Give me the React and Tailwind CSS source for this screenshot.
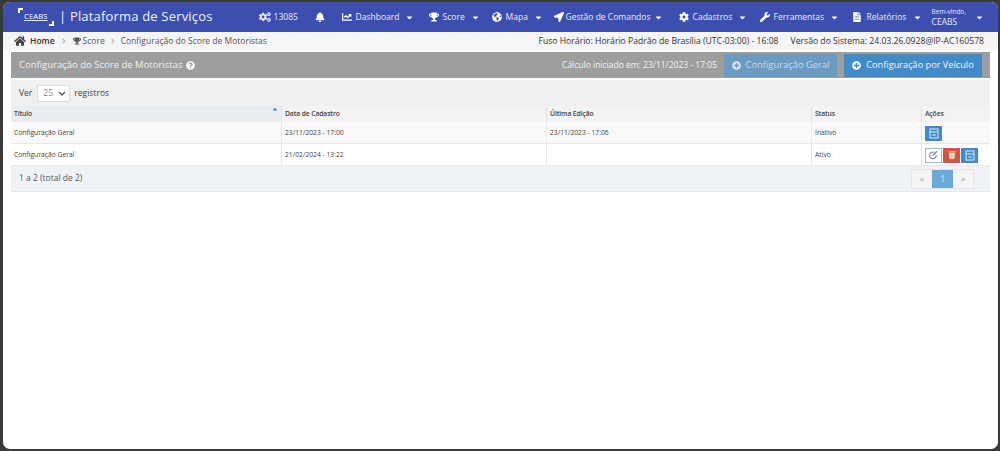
import React from 'react';
import {
  FaCogs, FaBell, FaChartLine, FaTrophy, FaGlobeAmericas, FaLocationArrow, FaCog, FaWrench,
  FaFileAlt, FaHome, FaAngleRight, FaQuestionCircle, FaPlusCircle, FaTrash, FaCaretDown, FaCaretUp,
} from 'react-icons/fa';

const menu = [
  { label: 'Dashboard', icon: FaChartLine, width: 'w-[87px]', gap: 'gap-[4px]' },
  { label: 'Score', icon: FaTrophy, width: 'w-[63px]', gap: 'gap-[4px]' },
  { label: 'Mapa', icon: FaGlobeAmericas, width: 'w-[62px]', gap: 'gap-[4px]' },
  { label: 'Gestão de Comandos', icon: FaLocationArrow, width: 'w-[125px]', gap: 'gap-[2px]' },
  { label: 'Cadastros', icon: FaCog, width: 'w-[81px]', gap: 'gap-[4px]' },
  { label: 'Ferramentas', icon: FaWrench, width: 'w-[92px]', gap: 'gap-[4px]' },
  { label: 'Relatórios', icon: FaFileAlt, width: 'w-[80px]', gap: 'gap-[5px]' },
];

function ListIcon() {
  return (
    <svg width="10" height="11" viewBox="0 0 10 11" fill="none" stroke="currentColor">
      <rect x="1" y="1" width="8" height="9" strokeWidth="1" />
      <path d="M1 4h8M3 7h4" strokeWidth="1" />
    </svg>
  );
}

function EditIcon() {
  return (
    <svg width="11" height="10" viewBox="0 0 11 10" fill="none" stroke="#6d8ba5" strokeWidth="1.1">
      <path d="M6 2.2A3.3 3.3 0 1 0 8.2 5" />
      <path d="M4.6 5.6L9 1.2" strokeWidth="1.4" />
    </svg>
  );
}

function Logo() {
  return (
    <div className="relative w-[36px] h-[18px] text-white">
      <span className="absolute left-0 top-0 w-[5px] h-[5px] border-l-2 border-t-2 border-white" />
      <span className="absolute right-0 bottom-0 w-[5px] h-[5px] border-r-2 border-b-2 border-white" />
      <span className="absolute left-[6px] top-[4px] text-[7.5px] leading-[9px] tracking-[0.2px] underline decoration-[#dfe3f5]">CEABS</span>
    </div>
  );
}

function Cell({ children, className = '' }) {
  return <div className={`flex items-center pl-[3px] pt-[1px] text-[6.75px] text-[#444] whitespace-nowrap ${className}`}>{children}</div>;
}

const cols = 'grid grid-cols-[271px_265px_265px_110px_68px]';

export default function App() {
  return (
    <div className="w-[1000px] h-[451px] bg-[#3a3a3a] pt-[2px] pb-[2px] pl-[3px] pr-[2px] font-['Open_Sans',sans-serif] overflow-hidden">
      <div className="h-full bg-white rounded-[7px] overflow-hidden flex flex-col">
        {/* navbar */}
        <div className="h-[30px] shrink-0 bg-[#3c4fb1] flex items-center text-[#e6e9f7] pl-[15px]">
          <Logo />
          <span className="ml-[5px] text-[13px] tracking-[0.18px] text-[#f0f2fb] whitespace-nowrap">| Plataforma de Serviços</span>
          <div className="ml-[46px] flex items-center gap-[3px] text-[8.5px] w-[56px] shrink-0">
            <FaCogs className="text-[12px]" />
            <span>13085</span>
          </div>
          <FaBell className="text-[10px] mr-[17px] shrink-0 text-white" />
          {menu.map((m) => (
            <div key={m.label} className={`flex items-center text-[8.5px] whitespace-nowrap shrink-0 ${m.gap} ${m.width}`}>
              <m.icon className="text-[10px] shrink-0 text-white" />
              <span>{m.label}</span>
              <FaCaretDown className="text-[9px] ml-[2px] text-white" />
            </div>
          ))}
          <div className="flex items-center shrink-0">
            <div className="leading-[10px] w-[43px]">
              <div className="text-[6.5px]">Bem-vindo,</div>
              <div className="text-[8.5px]">CEABS</div>
            </div>
            <FaCaretDown className="text-[9px] text-white" />
          </div>
        </div>

        {/* breadcrumb */}
        <div className="h-[18px] shrink-0 bg-[#f5f5f5] flex items-center pl-[11px] pr-[14px] text-[8.5px] text-[#555] whitespace-nowrap">
          <FaHome className="text-[12px] text-[#444]" />
          <span className="ml-[4px] font-semibold text-[#333]">Home</span>
          <FaAngleRight className="text-[8px] mx-[5px] text-[#bbb]" />
          <FaTrophy className="text-[8px] text-[#555]" />
          <span className="ml-[2px]">Score</span>
          <FaAngleRight className="text-[8px] mx-[4px] text-[#bbb]" />
          <span>Configuração do Score de Motoristas</span>
          <span className="ml-auto text-[8.65px] text-[#333]">Fuso Horário: Horário Padrão de Brasília (UTC-03:00) - 16:08</span>
          <span className="ml-[12px] text-[8.65px] text-[#333]">Versão do Sistema: 24.03.26.0928@IP-AC160578</span>
        </div>

        <div className="flex-1 pl-[8px] pr-[8px] pt-[2px]">
          {/* title bar */}
          <div className="h-[26px] bg-[#9e9e9e] flex items-center pl-[8px] pr-[8px] text-white">
            <span className="text-[9.5px] text-[#eee]">Configuração do Score de Motoristas</span>
            <FaQuestionCircle className="text-[9px] ml-[4px]" />
            <span className="ml-auto text-[8.5px] text-[#f2f2f2]">Cálculo iniciado em: 23/11/2023 - 17:05</span>
            <button className="ml-[7px] h-[23px] w-[113px] bg-[#6a9bc3] text-[#c5d7e6] text-[9.4px] flex items-center justify-center gap-[5px] whitespace-nowrap">
              <FaPlusCircle className="text-[9px] text-[#dce6ee]" />
              Configuração Geral
            </button>
            <button className="ml-[7px] h-[23px] w-[138px] bg-[#428bca] text-[#f0f5fa] text-[9.2px] flex items-center justify-center gap-[5px] whitespace-nowrap">
              <FaPlusCircle className="text-[9px] text-white" />
              Configuração por Veículo
            </button>
          </div>

          {/* length filter */}
          <div className="mt-[2px] h-[26px] bg-[#f0f0f0] flex items-center pl-[8px] text-[8.5px] text-[#444]">
            <span>Ver</span>
            <div className="ml-[5px] w-[33px] h-[17px] bg-white border border-[#ddd] flex items-center justify-between pl-[5px] pr-[3px] text-[#888]">
              25
              <svg width="8" height="5" viewBox="0 0 8 5" fill="none" stroke="#555" strokeWidth="1.3"><path d="M1 1l3 3 3-3" /></svg>
            </div>
            <span className="ml-[4px]">registros</span>
          </div>

          {/* table */}
          <div className={`${cols} h-[16px] bg-[#f3f3f3] font-semibold`}>
            <Cell className="relative bg-[#e8edf2] border-r border-[#e2e2e2] tracking-[-0.1px]">
              Título
              <FaCaretUp className="absolute right-[2px] top-[-1px] text-[8px] text-[#428bca]" />
            </Cell>
            <Cell className="border-r border-[#e2e2e2] tracking-[-0.1px]">Data de Cadastro</Cell>
            <Cell className="border-r border-[#e2e2e2] tracking-[-0.1px]">Última Edição</Cell>
            <Cell className="border-r border-[#e2e2e2] tracking-[-0.1px]">Status</Cell>
            <Cell className="tracking-[-0.1px]">Ações</Cell>
          </div>
          <div className={`${cols} h-[22px] bg-[#f9f9f9] border-b border-[#e8e8e8]`}>
            <Cell className="border-r border-[#e8e8e8]">Configuração Geral</Cell>
            <Cell className="border-r border-[#e8e8e8]">23/11/2023 - 17:00</Cell>
            <Cell className="border-r border-[#e8e8e8]">23/11/2023 - 17:06</Cell>
            <Cell className="border-r border-[#e8e8e8]">Inativo</Cell>
            <div className="flex items-center pl-[3px] pt-[1px]">
              <span className="w-[17px] h-[15px] bg-[#428bca] text-[#dbe8f3] flex items-center justify-center"><ListIcon /></span>
            </div>
          </div>
          <div className={`${cols} h-[22px] bg-white border-b border-[#e8e8e8]`}>
            <Cell className="border-r border-[#e8e8e8]">Configuração Geral</Cell>
            <Cell className="border-r border-[#e8e8e8]">21/02/2024 - 13:22</Cell>
            <Cell className="border-r border-[#e8e8e8]" />
            <Cell className="border-r border-[#e8e8e8]">Ativo</Cell>
            <div className="flex items-center pl-[3px] pt-[1px]">
              <span className="w-[17px] h-[15px] bg-white border border-[#8fb9dc] flex items-center justify-center">
                <EditIcon />
              </span>
              <span className="ml-[1px] w-[17px] h-[15px] bg-[#d2553f] text-[#f3d0ca] flex items-center justify-center">
                <FaTrash className="text-[8px]" />
              </span>
              <span className="ml-[1px] w-[17px] h-[15px] bg-[#428bca] text-[#dbe8f3] flex items-center justify-center"><ListIcon /></span>
            </div>
          </div>

          {/* footer */}
          <div className="h-[26px] bg-[#eff3f8] border-b border-[#e3e6ea] flex items-center pl-[8px] pr-[16px] text-[8.5px] text-[#555]">
            <span>1 a 2 (total de 2)</span>
            <div className="ml-auto flex items-center h-[20px] border border-[#e5e5e5] text-[9px]">
              <span className="w-[20px] h-full bg-[#f5f5f5] text-[#aaa] flex items-center justify-center">«</span>
              <span className="w-[21px] h-full bg-[#6baad8] text-[#d6e8f5] flex items-center justify-center">1</span>
              <span className="w-[20px] h-full bg-[#f5f5f5] text-[#aaa] flex items-center justify-center">»</span>
            </div>
          </div>
        </div>
      </div>
    </div>
  );
}
